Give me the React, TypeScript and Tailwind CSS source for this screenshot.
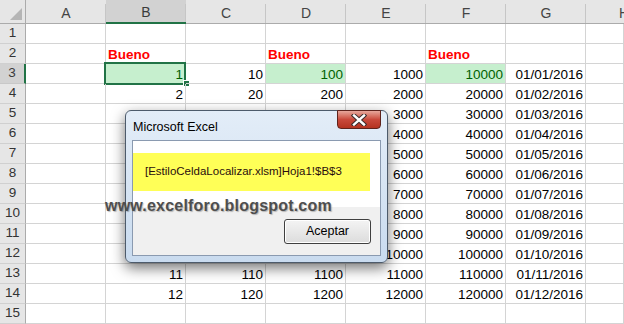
import React from "react";

const COLS = ["A", "B", "C", "D", "E", "F", "G", "H"];
const ROWS = Array.from({ length: 15 }, (_, i) => i + 1);

function pad(n: number) {
  return n < 10 ? `0${n}` : String(n);
}

// value shown in a cell
function cellValue(row: number, col: string): string {
  if (row === 2 && (col === "B" || col === "D" || col === "F")) return "Bueno";
  if (row < 3 || row > 14) return "";
  const i = row - 2;
  switch (col) {
    case "B": return String(i);
    case "C": return String(i * 10);
    case "D": return String(i * 100);
    case "E": return String(i * 1000);
    case "F": return String(i * 10000);
    case "G": return `01/${pad(i)}/2016`;
    default: return "";
  }
}

function isGood(row: number, col: string) {
  return row === 3 && (col === "B" || col === "D" || col === "F");
}

function HeaderRow() {
  return (
    <div className="flex h-[24px] bg-[#e6e6e6] text-[14px] text-[#444]">
      <div className="relative w-[26px] shrink-0 border-b border-r border-[#ababab]">
        <svg className="absolute right-[3px] bottom-[3px]" width="12" height="12" viewBox="0 0 12 12">
          <path d="M12 0 L12 12 L0 12 Z" fill="#b5b5b5" />
        </svg>
      </div>
      {COLS.map(c => (
        <div
          key={c}
          className={
            c === "B"
              ? "relative flex w-[80px] shrink-0 items-center justify-center border-b-2 border-[#217346] bg-[#d2d2d2] pt-[3px] text-[#3b3b3b] after:absolute after:right-0 after:top-[4px] after:bottom-0 after:w-px after:bg-[#c6c6c6]"
              : c === "H"
              ? "flex flex-1 items-center justify-start border-b border-[#ababab] pl-[33px] pt-[3px]"
              : "relative flex w-[80px] shrink-0 items-center justify-center border-b border-[#ababab] pt-[3px] after:absolute after:right-0 after:top-[4px] after:bottom-0 after:w-px after:bg-[#c6c6c6]"
          }
        >
          {c}
        </div>
      ))}
    </div>
  );
}

function SheetRow({ row }: { row: number }) {
  const selected = row === 3;
  return (
    <div className="flex h-[20px]">
      <div
        className={
          selected
            ? "flex w-[26px] shrink-0 items-center justify-center border-b border-r-2 border-b-[#c8c8c8] border-r-[#217346] bg-[#d2d2d2] text-[13.5px] text-[#3b3b3b]"
            : "flex w-[26px] shrink-0 items-center justify-center border-b border-r border-b-[#d0d0d0] border-r-[#ababab] bg-[#e6e6e6] text-[13.5px] text-[#333]"
        }
      >
        {row}
      </div>
      {COLS.map(c => {
        const v = cellValue(row, c);
        const bueno = v === "Bueno";
        const good = isGood(row, c);
        let tone = "justify-end pr-[2px] text-black";
        if (bueno) tone = "justify-start pl-[2px] font-bold text-[#ff0000]";
        else if (good) tone = "justify-end pr-[2px] bg-[#c6efce] text-[#006100]";
        return (
          <div
            key={c}
            className={
              (c === "H" ? "flex-1 " : "w-[80px] shrink-0 ") +
              "relative flex items-center border-b border-r border-[#d4d4d4] pt-px text-[13.5px] leading-[17px] " +
              tone
            }
          >
            {v}
            {selected && c === "B" && (
              <>
                <div className="pointer-events-none absolute left-[-2px] top-[-2px] h-[23px] w-[82px] border-2 border-[#217346]" />
                <div className="absolute right-[-5px] bottom-[-4px] h-[7px] w-[7px] border border-white bg-[#217346]" />
              </>
            )}
          </div>
        );
      })}
    </div>
  );
}

function CloseGlyph() {
  return (
    <svg width="16" height="12" viewBox="0 0 16 12">
      <path d="M3 1.5 L13 10.5 M13 1.5 L3 10.5" stroke="#3a2a2a" strokeWidth="4.4" strokeLinecap="square" />
      <path d="M3 1.5 L13 10.5 M13 1.5 L3 10.5" stroke="#ffffff" strokeWidth="2.4" strokeLinecap="square" />
    </svg>
  );
}

function MessageBox() {
  return (
    <div className="absolute left-[125px] top-[110px] flex h-[153px] w-[263px] flex-col rounded-[6px] border border-[#4d5b6b] bg-gradient-to-b from-[#e3edf8] via-[#d6e4f3] to-[#c9dbef] shadow-[0_5px_14px_rgba(0,0,0,0.55)]">
      {/* title bar */}
      <div className="relative flex h-[29px] items-center pl-[7px] pt-[3px] text-[12.5px] text-black">
        Microsoft Excel
        <div className="absolute right-[6px] top-[-1px] flex h-[19px] w-[44px] items-center justify-center rounded-b-[4px] border border-[#5e231c] bg-gradient-to-b from-[#e6a79c] via-[#c9493b] to-[#b4321f]">
          <CloseGlyph />
        </div>
      </div>
      {/* client area */}
      <div className="mx-[6px] mb-[6px] flex flex-1 flex-col border border-[#8a9ab0] bg-white">
        <div className="h-[66px] pt-[12px]">
          <div className="flex h-[38px] w-[237px] items-center bg-[#ffff57] pl-[12px] text-[11.5px] text-[#2a0d0d]">
            [EstiloCeldaLocalizar.xlsm]Hoja1!$B$3
          </div>
        </div>
        <div className="flex flex-1 items-start justify-end bg-[#f0f0f0] pr-[9px] pt-[12px]">
          <div className="flex h-[25px] w-[87px] items-center justify-center rounded-[3px] border border-[#3f3f3f] bg-gradient-to-b from-[#f4f4f4] to-[#dcdcdc] text-[12.5px] text-black shadow-[inset_0_0_0_1px_#ffffff]">
            Aceptar
          </div>
        </div>
      </div>
    </div>
  );
}

export default function App() {
  return (
    <div className="relative h-[324px] w-[624px] overflow-hidden bg-white font-['Liberation_Sans',Arial,sans-serif]">
      <HeaderRow />
      {ROWS.map(r => (
        <SheetRow key={r} row={r} />
      ))}

      <MessageBox />

      {/* watermark */}
      <div className="absolute left-[105px] top-[194px] text-[16px] font-bold tracking-[0.2px] text-[#4e4e4e] [text-shadow:1px_1px_1px_rgba(0,0,0,0.25)]">
        www.excelforo.blogspot.com
      </div>
    </div>
  );
}
